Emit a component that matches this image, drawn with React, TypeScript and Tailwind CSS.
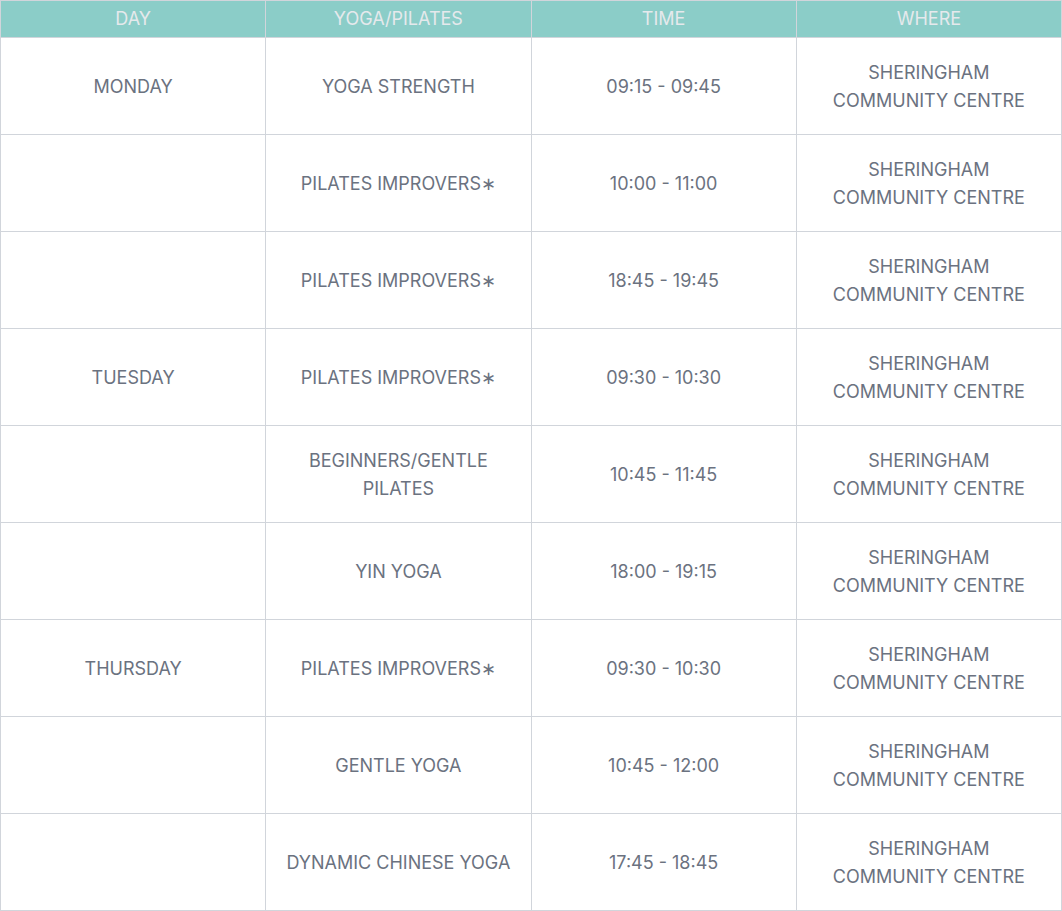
import React from 'react';

interface Session {
  day: string;
  cls: string;
  time: string;
}

const sessions: Session[] = [
  { day: 'MONDAY', cls: 'YOGA STRENGTH', time: '09:15 - 09:45' },
  { day: '', cls: 'PILATES IMPROVERS∗', time: '10:00 - 11:00' },
  { day: '', cls: 'PILATES IMPROVERS∗', time: '18:45 - 19:45' },
  { day: 'TUESDAY', cls: 'PILATES IMPROVERS∗', time: '09:30 - 10:30' },
  { day: '', cls: 'BEGINNERS/GENTLE PILATES', time: '10:45 - 11:45' },
  { day: '', cls: 'YIN YOGA', time: '18:00 - 19:15' },
  { day: 'THURSDAY', cls: 'PILATES IMPROVERS∗', time: '09:30 - 10:30' },
  { day: '', cls: 'GENTLE YOGA', time: '10:45 - 12:00' },
  { day: '', cls: 'DYNAMIC CHINESE YOGA', time: '17:45 - 18:45' },
];

const headers = ['DAY', 'YOGA/PILATES', 'TIME', 'WHERE'];

const App: React.FC = () => {
  return (
    <div className="w-[1062px] bg-white font-['Inter',sans-serif]">
      <table className="w-full table-fixed border-collapse border border-[#d1d5db]">
        <thead>
          <tr className="bg-[#8bcdc8]">
            {headers.map((h) => (
              <th
                key={h}
                className="h-[37px] border border-[#d1d5db] px-4 text-center text-[18px] font-normal leading-6 text-[#e5e9ec]"
              >
                {h}
              </th>
            ))}
          </tr>
        </thead>
        <tbody>
          {sessions.map((s, i) => (
            <tr key={i} className="h-[97px]">
              {[s.day, s.cls, s.time, 'SHERINGHAM COMMUNITY CENTRE'].map((v, j) => (
                <td
                  key={j}
                  className="border border-[#d1d5db] px-4 pt-[2px] text-center align-middle text-[18px] leading-7 text-[#6b7280]"
                >
                  {v}
                </td>
              ))}
            </tr>
          ))}
        </tbody>
      </table>
    </div>
  );
};

export default App;
